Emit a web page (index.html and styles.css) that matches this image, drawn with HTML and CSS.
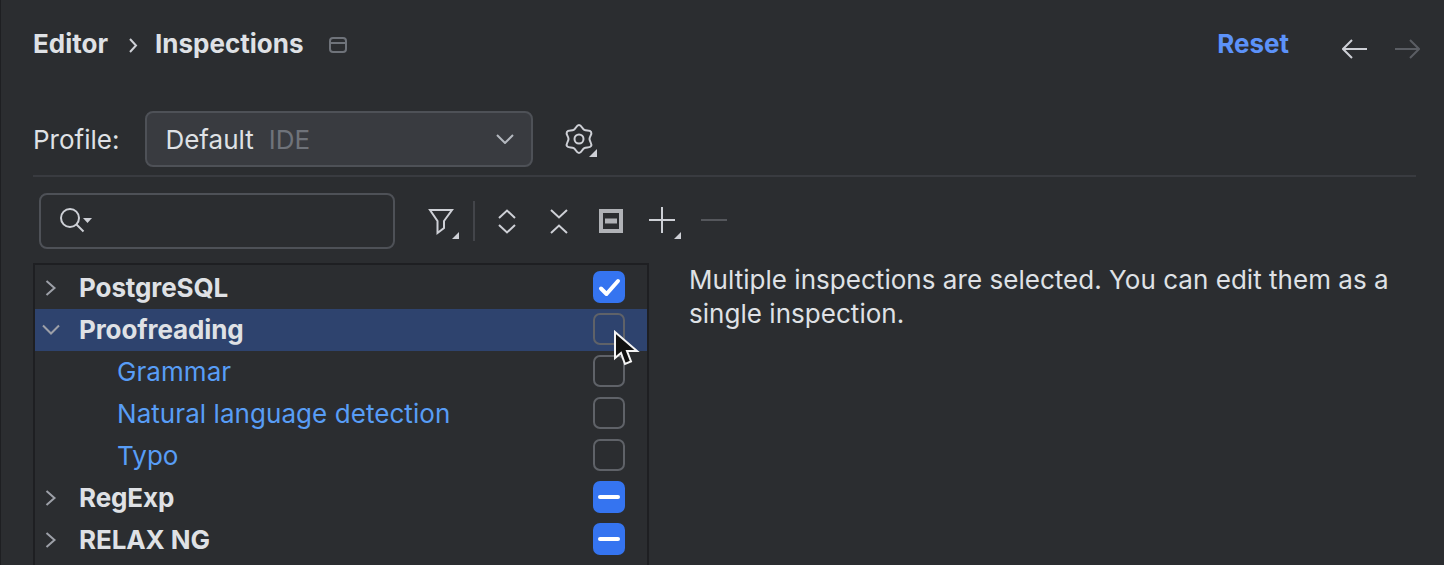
FILE: index.html
```html
<!DOCTYPE html>
<html lang="en">
<head>
    <meta charset="UTF-8">
    <title>Inspections</title>
    <link rel="stylesheet" href="styles.css">
</head>
<body>
    <div class="page">
        <div class="header">
            <span class="crumb">Editor</span>
            <svg class="crumb-sep" width="47" height="24" viewBox="0 0 47 24"><path d="M22 6l6 6.5-6 6.5" /></svg>
            <span class="crumb">Inspections</span>
            <svg class="window-icon" width="20" height="24" viewBox="0 0 20 24"><rect x="2" y="7" width="16" height="14" rx="3" /><path d="M2 12h16" /></svg>
            <a class="reset">Reset</a>
            <svg class="nav-icon" width="26" height="24" viewBox="0 0 26 24"><path d="M25 12H1M10 3l-9 9 9 9" /></svg>
            <svg class="nav-icon off" width="26" height="24" viewBox="0 0 26 24"><path d="M1 12h24M16 3l9 9-9 9" /></svg>
        </div>

        <div class="profile">
            <span>Profile:</span>
            <div class="combo">
                <span>Default</span>
                <span class="dim">IDE</span>
                <svg class="combo-arrow" width="18" height="10" viewBox="0 0 18 10"><path d="M1 1l8 8 8-8" /></svg>
            </div>
            <svg class="icon gear" width="40" height="40" viewBox="0 0 40 40">
                <path d="M20 6C22.5 6 23.08 9.66 25.25 10.91C27.42 12.16 30.87 10.83 32.12 13C33.37 15.17 30.5 17.5 30.5 20C30.5 22.5 33.37 24.83 32.12 27C30.87 29.17 27.42 27.84 25.25 29.09C23.08 30.34 22.5 34 20 34C17.5 34 16.92 30.34 14.75 29.09C12.58 27.84 9.13 29.17 7.88 27C6.63 24.83 9.5 22.5 9.5 20C9.5 17.5 6.63 15.17 7.88 13C9.13 10.83 12.58 12.16 14.75 10.91C16.92 9.66 17.5 6 20 6Z" />
                <circle cx="20" cy="20" r="4.5" />
                <polygon class="corner" points="38,30 38,38 30,38" />
            </svg>
        </div>

        <div class="toolbar">
            <div class="search">
                <svg class="icon" width="40" height="30" viewBox="0 0 40 30"><circle cx="11" cy="12" r="9" /><path d="M17.5 18.5L24.5 25.5" /><polygon class="corner" points="24,12 33,12 28.5,17" /></svg>
            </div>
            <svg class="icon tool" width="52" height="52" viewBox="0 0 52 52"><path d="M15 15H37L29 26V33L22.5 38V26Z" /><polygon class="corner" points="44,37 44,44 37,44" /></svg>
            <div class="tool-sep"></div>
            <svg class="icon tool" width="52" height="52" viewBox="0 0 52 52"><path d="M18 23l8-7.5 8 7.5M18 30l8 7.5 8-7.5" /></svg>
            <svg class="icon tool" width="52" height="52" viewBox="0 0 52 52"><path d="M18 15l8 7.5 8-7.5M18 38l8-7.5 8 7.5" /></svg>
            <svg class="icon tool" width="52" height="52" viewBox="0 0 52 52"><rect class="thick" x="16" y="16" width="20" height="20" /><rect class="solid" x="20" y="23.5" width="12" height="5" /></svg>
            <svg class="icon tool" width="52" height="52" viewBox="0 0 52 52"><path d="M12 25h26M25 12v26" /><polygon class="corner" points="44,37 44,44 37,44" /></svg>
            <svg class="icon tool off" width="52" height="52" viewBox="0 0 52 52"><path d="M12 25h26" /></svg>
        </div>

        <div class="content">
            <div class="tree">
                <div class="row group">
                    <svg class="arrow" width="32" height="20" viewBox="0 0 32 20"><path d="M11.5 3l8 7-8 7" /></svg>
                    <span class="label">PostgreSQL</span>
                    <span class="check on"><svg width="32" height="32" viewBox="0 0 32 32"><path d="M8 17.5l5.5 5.5L25 10" /></svg></span>
                </div>
                <div class="row group selected">
                    <svg class="arrow" width="32" height="20" viewBox="0 0 32 20"><path d="M8 5.5l8 8 8-8" /></svg>
                    <span class="label">Proofreading</span>
                    <span class="check"></span>
                </div>
                <div class="row child">
                    <span class="label">Grammar</span>
                    <span class="check"></span>
                </div>
                <div class="row child">
                    <span class="label">Natural language detection</span>
                    <span class="check"></span>
                </div>
                <div class="row child">
                    <span class="label">Typo</span>
                    <span class="check"></span>
                </div>
                <div class="row group">
                    <svg class="arrow" width="32" height="20" viewBox="0 0 32 20"><path d="M11.5 3l8 7-8 7" /></svg>
                    <span class="label">RegExp</span>
                    <span class="check on"><span class="dash"></span></span>
                </div>
                <div class="row group">
                    <svg class="arrow" width="32" height="20" viewBox="0 0 32 20"><path d="M11.5 3l8 7-8 7" /></svg>
                    <span class="label">RELAX NG</span>
                    <span class="check on"><span class="dash"></span></span>
                </div>
            </div>
            <p class="message">Multiple inspections are selected. You can edit them as a single inspection.</p>
        </div>

        <svg class="cursor" width="28" height="40" viewBox="0 0 28 40"><path d="M2 2V28L8 23L12 34L18 31.5L14 21H24Z" /></svg>
    </div>
</body>
</html>
```

FILE: styles.css
```css
* {
    margin: 0;
    padding: 0;
    box-sizing: border-box;
}

body {
    background: #2b2d30;
    color: #dfe1e5;
    font-family: Inter, "Noto Sans", sans-serif;
    font-size: 26px;
    overflow: hidden;
}

svg {
    display: block;
    flex: none;
    fill: none;
    stroke-width: 2;
}

.page {
    position: relative;
    height: 565px;
    overflow: hidden;
    padding: 0 24px 0 32px;
    border-left: 1px solid #1e1f22;
}

.header {
    display: flex;
    align-items: center;
    height: 86px;
}

.crumb {
    font-weight: 700;
}

.crumb-sep {
    margin-top: 3px;
}

.crumb-sep path {
    stroke: #ced0d6;
}

.window-icon {
    margin-left: 24px;
}

.window-icon rect,
.window-icon path {
    stroke: #6f737a;
}

.reset {
    margin-left: auto;
    margin-right: 53px;
    color: #5c92f9;
    font-weight: 700;
}

.nav-icon {
    margin-top: 12px;
}

.nav-icon path {
    stroke: #ced0d6;
}

.nav-icon.off {
    margin-left: 26px;
}

.nav-icon.off path {
    stroke: #5a5d63;
}

.profile {
    display: flex;
    align-items: center;
    margin-top: 25px;
    margin-right: 4px;
    padding-bottom: 8px;
    border-bottom: 2px solid #393b40;
}

.combo {
    display: flex;
    align-items: center;
    width: 388px;
    height: 56px;
    margin-left: 26px;
    padding: 0 17px 0 18px;
    background: #393b40;
    border: 2px solid #4e5157;
    border-radius: 8px;
}

.dim {
    margin-left: 15px;
    color: #6f737a;
}

.combo-arrow {
    margin-left: auto;
}

.combo-arrow path {
    stroke: #b4b8bf;
}

.gear {
    margin-left: 26px;
}

.icon path,
.icon circle,
.icon rect {
    stroke: #ced0d6;
}

.icon .corner {
    fill: #ced0d6;
    stroke: none;
}

.icon .thick {
    stroke: #b0b2b6;
    stroke-width: 4;
}

.icon .solid {
    fill: #b0b2b6;
    stroke: none;
}

.icon.off path {
    stroke: #55575c;
}

.toolbar {
    display: flex;
    align-items: center;
    margin-top: 16px;
    padding-left: 6px;
}

.search {
    display: flex;
    align-items: center;
    width: 356px;
    height: 56px;
    margin-right: 20px;
    padding-left: 18px;
    border: 2px solid #4e5157;
    border-radius: 8px;
}

.tool-sep {
    width: 2px;
    height: 40px;
    margin: 0 6px;
    background: #43454a;
}

.content {
    display: flex;
    margin-top: 14px;
}

.tree {
    flex: none;
    width: 616px;
    height: 320px;
    padding-top: 2px;
    border: 2px solid #1e1f22;
}

.row {
    display: flex;
    align-items: center;
    height: 42px;
    padding-right: 22px;
}

.row.selected {
    background: #2e436e;
}

.row.child {
    padding-left: 82px;
    color: #589df6;
    letter-spacing: 0.06px;
}

.label {
    margin-bottom: 2px;
}

.group .label {
    margin-left: 12px;
    font-weight: 700;
    letter-spacing: -0.1px;
}

.arrow path {
    stroke: #9da0a8;
}

.check {
    display: block;
    width: 32px;
    height: 32px;
    margin: 0 0 2px auto;
    border: 2px solid #5f6268;
    border-radius: 7px;
}

.check.on {
    display: flex;
    align-items: center;
    justify-content: center;
    background: #3574f0;
    border: none;
}

.check path {
    stroke: #fff;
    stroke-width: 4;
    stroke-linecap: round;
    stroke-linejoin: round;
}

.dash {
    width: 22px;
    height: 4px;
    background: #fff;
    border-radius: 2px;
}

.message {
    width: 720px;
    margin-left: 40px;
    line-height: 34px;
    letter-spacing: 0.035px;
}

.cursor {
    position: absolute;
    left: 612px;
    top: 330px;
}

.cursor path {
    fill: #111;
    stroke: #f4f4f4;
    stroke-width: 2;
}
```
